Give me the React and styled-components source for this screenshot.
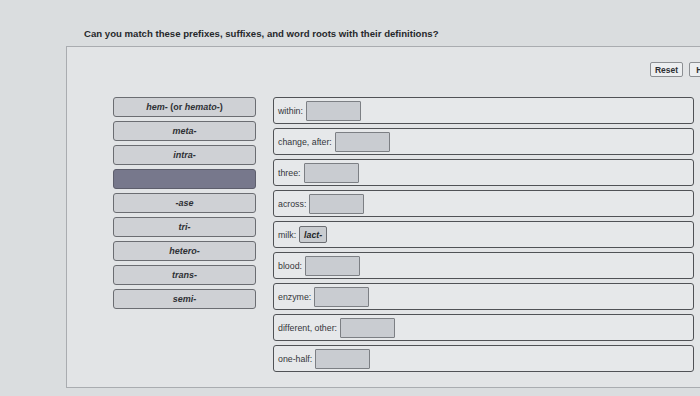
import React from "react";
import styled, { createGlobalStyle } from "styled-components";

const Global = createGlobalStyle`
  html, body { margin: 0; padding: 0; }
  body {
    background: #dadddf;
    font-family: "Liberation Sans", Arial, sans-serif;
    color: #2b2d30;
  }
`;

const terms = [
  { label: "hem- (or hemato-)", html: true },
  { label: "meta-" },
  { label: "intra-" },
  { label: "", empty: true },
  { label: "-ase" },
  { label: "tri-" },
  { label: "hetero-" },
  { label: "trans-" },
  { label: "semi-" },
];

const defs = [
  { text: "within:" },
  { text: "change, after:" },
  { text: "three:" },
  { text: "across:" },
  { text: "milk:", filled: "lact-" },
  { text: "blood:" },
  { text: "enzyme:" },
  { text: "different, other:" },
  { text: "one-half:" },
];

const App = () => {
  return (
    <Page>
      <Global />
      <Title>
        Can you match these prefixes, suffixes, and word roots with their definitions?
      </Title>
      <Panel>
        <Toolbar>
          <ToolButton>Reset</ToolButton>
          <ToolButton>Help</ToolButton>
        </Toolbar>
        <Columns>
          <TermList>
            {terms.map((t, i) => (
              <Term key={i} $empty={t.empty}>
                {t.html ? (
                  <>
                    hem- <span className="up">(or </span>hemato-<span className="up">)</span>
                  </>
                ) : (
                  t.label
                )}
              </Term>
            ))}
          </TermList>
          <DefList>
            {defs.map((d, i) => (
              <DefRow key={i}>
                <span>{d.text}</span>
                {d.filled ? <Placed>{d.filled}</Placed> : <DropBox />}
              </DefRow>
            ))}
          </DefList>
        </Columns>
      </Panel>
    </Page>
  );
};

export default App;

const Page = styled.div`
  width: 700px;
  height: 396px;
  overflow: hidden;
  padding-top: 27px;
  box-sizing: border-box;
`;

const Title = styled.div`
  margin-left: 84px;
  font-size: 9.6px;
  font-weight: 700;
  color: #26282b;
  height: 13px;
  line-height: 13px;
`;

const Panel = styled.div`
  margin-left: 66px;
  margin-top: 6px;
  width: 666px;
  height: 342px;
  box-sizing: border-box;
  background: #e2e4e6;
  border: 1px solid #a9acb0;
  padding: 15px 9px 0 46px;
`;

const Toolbar = styled.div`
  display: flex;
  justify-content: flex-end;
  gap: 6px;
  height: 16px;
`;

const ToolButton = styled.div`
  height: 15px;
  width: 33px;
  box-sizing: border-box;
  border: 1px solid #8c8f93;
  border-radius: 2px;
  background: #eceef0;
  font-size: 8.5px;
  font-weight: 700;
  color: #2d2f33;
  display: flex;
  align-items: center;
  justify-content: center;
  overflow: hidden;
`;

const Columns = styled.div`
  display: flex;
  gap: 17px;
  margin-top: 19px;
`;

const TermList = styled.div`
  display: flex;
  flex-direction: column;
  gap: 4px;
  width: 143px;
`;

const Term = styled.div`
  height: 20px;
  box-sizing: border-box;
  border: 1px solid ${(p) => (p.$empty ? "#5d5e6c" : "#6b6d72")};
  border-radius: 3px;
  background: ${(p) => (p.$empty ? "#77788c" : "#cfd1d5")};
  font-size: 9px;
  font-weight: 700;
  font-style: italic;
  color: #2e3034;
  display: flex;
  align-items: center;
  justify-content: center;
  white-space: pre;
  .up {
    font-style: normal;
  }
`;

const DefList = styled.div`
  display: flex;
  flex-direction: column;
  gap: 4px;
  width: 421px;
`;

const DefRow = styled.div`
  height: 27px;
  box-sizing: border-box;
  border: 1px solid #505256;
  border-radius: 3px;
  background: #e6e8ea;
  display: flex;
  align-items: center;
  gap: 3px;
  padding-left: 4px;
  font-size: 8.8px;
  color: #34363a;
`;

const DropBox = styled.div`
  width: 55px;
  height: 20px;
  box-sizing: border-box;
  border: 1px solid #7c7f84;
  border-radius: 1px;
  background: #c9ccd1;
`;

const Placed = styled.div`
  height: 17px;
  padding: 0 4px;
  box-sizing: border-box;
  border: 1px solid #6b6d72;
  border-radius: 2px;
  background: #c9ccd0;
  font-weight: 700;
  font-style: italic;
  color: #222427;
  display: flex;
  align-items: center;
`;
